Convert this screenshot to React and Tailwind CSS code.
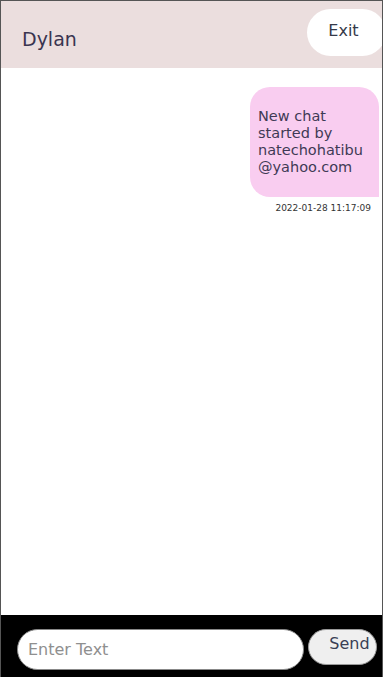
export default function App() {
  const font = { fontFamily: '"DejaVu Sans", "Noto Sans", sans-serif' };
  return (
    <div className="h-[677px] w-[383px] flex flex-col border-l border-t border-r border-[#555] overflow-hidden bg-white" style={font}>
      <header className="h-[67px] shrink-0 bg-[#ebdede] flex items-start justify-between overflow-hidden">
        <div className="pl-[21px] pt-[26px] text-[19px] leading-[24px] text-[#3a3550]">Dylan</div>
        <button className="mt-[8px] mr-[-4px] h-[47px] w-[79px] rounded-full bg-white text-[16px] text-[#353a4a] pb-[3px] pr-[6px]">Exit</button>
      </header>
      <main className="flex-1 flex flex-col items-end pt-[19px] pr-[3px]">
        <div className="w-[129px] rounded-[20px] rounded-br-none bg-[#f9cdf0] pl-[8px] pt-[21px] pb-[21px] text-[14.5px] leading-[17px] text-[#3f3a55] whitespace-nowrap">
          <div>New chat</div>
          <div>started by</div>
          <div>natechohatibu</div>
          <div>@yahoo.com</div>
        </div>
        <div className="mt-[5px] pr-[8px] text-[9px] leading-[12px] text-[#333]">2022-01-28 11:17:09</div>
      </main>
      <footer className="h-[62px] shrink-0 bg-black flex items-start pt-[14px] pl-[16px] gap-[4px]">
        <input placeholder="Enter Text" className="h-[41px] w-[287px] rounded-full border border-[#888] bg-white px-[10px] text-[16px] outline-none placeholder:text-[#8f8f8f]" style={font} />
        <button className="h-[36px] w-[69px] rounded-full border border-[#999] bg-[#efefef] text-[16px] text-[#3a3f55] pl-[14px] pb-[6px]">Send</button>
      </footer>
    </div>
  );
}
